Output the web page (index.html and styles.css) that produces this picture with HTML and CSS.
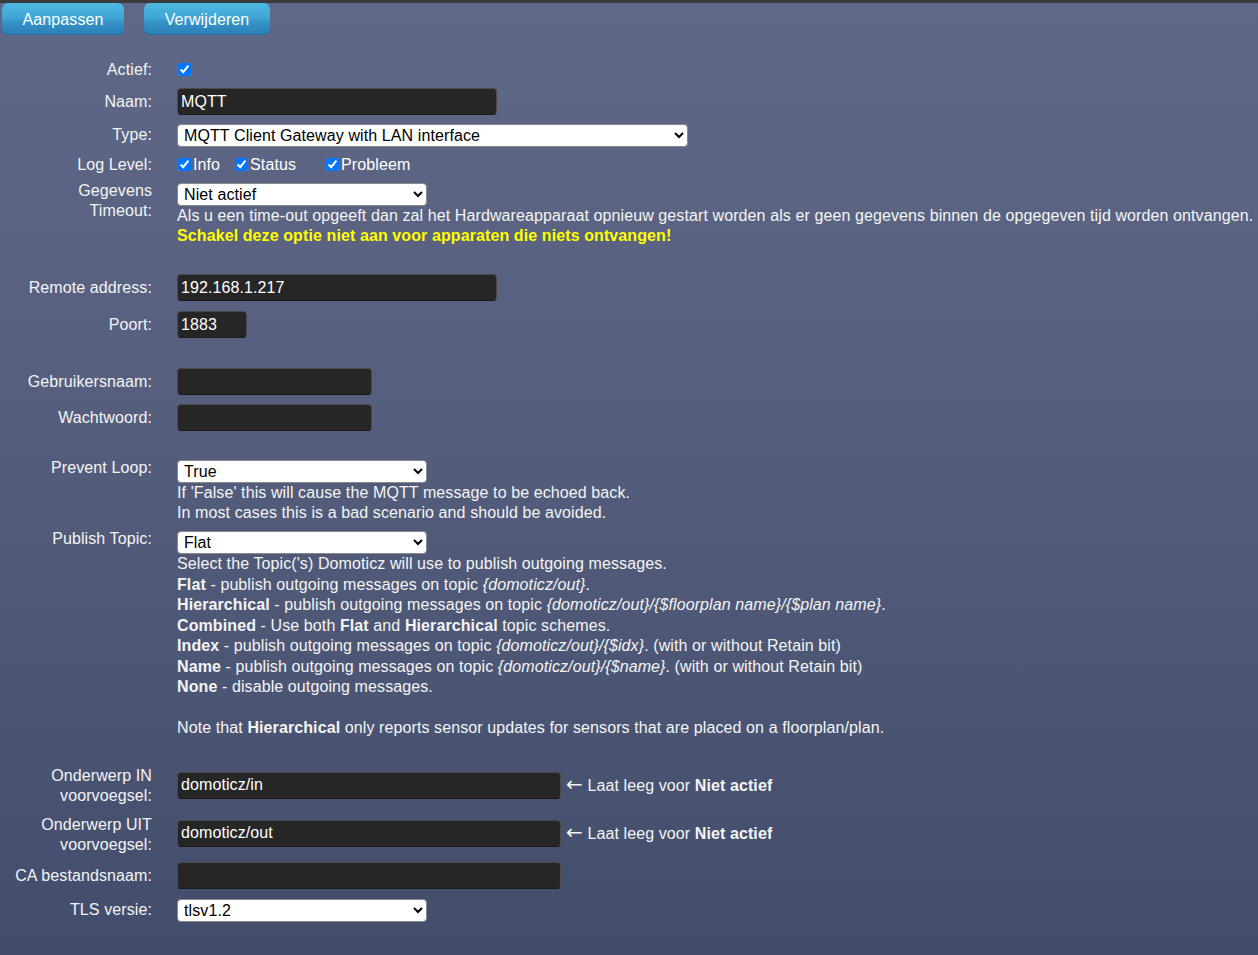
FILE: index.html
```html
<!DOCTYPE html>
<html lang="nl">
<head>
    <meta charset="UTF-8">
    <title>Hardware - MQTT</title>
    <link rel="stylesheet" href="styles.css">
</head>
<body>
    <div class="topbar"></div>

    <div class="actions">
        <button class="btn btn-edit">Aanpassen</button>
        <button class="btn btn-delete">Verwijderen</button>
    </div>

    <form class="hw-form">
        <div class="row row-active">
            <label class="lbl">Actief:</label>
            <div class="field"><input type="checkbox" class="chk" checked></div>
        </div>

        <div class="row gap-8">
            <label class="lbl lbl-input">Naam:</label>
            <div class="field"><input type="text" class="txt w-320" value="MQTT"></div>
        </div>

        <div class="row gap-9">
            <label class="lbl lbl-select">Type:</label>
            <div class="field">
                <select class="sel w-511">
                    <option>MQTT Client Gateway with LAN interface</option>
                </select>
            </div>
        </div>

        <div class="row gap-8">
            <label class="lbl">Log Level:</label>
            <div class="field loglevel">
                <span class="log-item"><input type="checkbox" class="chk" checked>Info</span>
                <span class="log-item log-status"><input type="checkbox" class="chk" checked>Status</span>
                <span class="log-item log-error"><input type="checkbox" class="chk" checked>Probleem</span>
            </div>
        </div>

        <div class="row gap-8">
            <label class="lbl lbl-up">Gegevens<br>Timeout:</label>
            <div class="field">
                <select class="sel w-250">
                    <option>Niet actief</option>
                </select>
                <p class="help nowrap">Als u een time-out opgeeft dan zal het Hardwareapparaat opnieuw gestart worden als er geen gegevens binnen de opgegeven tijd worden ontvangen.</p>
                <p class="help warn">Schakel deze optie niet aan voor apparaten die niets ontvangen!</p>
            </div>
        </div>

        <div class="row gap-28">
            <label class="lbl lbl-input">Remote address:</label>
            <div class="field"><input type="text" class="txt w-320" value="192.168.1.217"></div>
        </div>

        <div class="row gap-10">
            <label class="lbl lbl-input">Poort:</label>
            <div class="field"><input type="text" class="txt w-70" value="1883"></div>
        </div>

        <div class="row gap-30">
            <label class="lbl lbl-input">Gebruikersnaam:</label>
            <div class="field"><input type="text" class="txt w-195"></div>
        </div>

        <div class="row gap-9">
            <label class="lbl lbl-input">Wachtwoord:</label>
            <div class="field"><input type="password" class="txt w-195"></div>
        </div>

        <div class="row gap-29">
            <label class="lbl lbl-up">Prevent Loop:</label>
            <div class="field">
                <select class="sel w-250">
                    <option>True</option>
                    <option>False</option>
                </select>
                <p class="help">If 'False' this will cause the MQTT message to be echoed back.</p>
                <p class="help">In most cases this is a bad scenario and should be avoided.</p>
            </div>
        </div>

        <div class="row gap-8">
            <label class="lbl lbl-up">Publish Topic:</label>
            <div class="field topics">
                <select class="sel w-250">
                    <option>Flat</option>
                </select>
                <p class="help">Select the Topic('s) Domoticz will use to publish outgoing messages.</p>
                <p class="help"><b>Flat</b> - publish outgoing messages on topic <i>{domoticz/out}</i>.</p>
                <p class="help"><b>Hierarchical</b> - publish outgoing messages on topic <i>{domoticz/out}/{$floorplan name}/{$plan name}</i>.</p>
                <p class="help"><b>Combined</b> - Use both <b>Flat</b> and <b>Hierarchical</b> topic schemes.</p>
                <p class="help"><b>Index</b> - publish outgoing messages on topic <i>{domoticz/out}/{$idx}</i>. (with or without Retain bit)</p>
                <p class="help"><b>Name</b> - publish outgoing messages on topic <i>{domoticz/out}/{$name}</i>. (with or without Retain bit)</p>
                <p class="help"><b>None</b> - disable outgoing messages.</p>
                <p class="help">&nbsp;</p>
                <p class="help">Note that <b>Hierarchical</b> only reports sensor updates for sensors that are placed on a floorplan/plan.</p>
            </div>
        </div>

        <div class="row gap-27">
            <label class="lbl">Onderwerp IN<br>voorvoegsel:</label>
            <div class="field inline drop-6">
                <input type="text" class="txt w-384" value="domoticz/in">
                <span class="hint"><span class="arrow">&larr;</span> Laat leeg voor <b>Niet actief</b></span>
            </div>
        </div>

        <div class="row gap-9">
            <label class="lbl">Onderwerp UIT<br>voorvoegsel:</label>
            <div class="field inline drop-5">
                <input type="text" class="txt w-384" value="domoticz/out">
                <span class="hint"><span class="arrow">&larr;</span> Laat leeg voor <b>Niet actief</b></span>
            </div>
        </div>

        <div class="row gap-7">
            <label class="lbl lbl-input">CA bestandsnaam:</label>
            <div class="field"><input type="text" class="txt w-384"></div>
        </div>

        <div class="row gap-10">
            <label class="lbl lbl-select">TLS versie:</label>
            <div class="field">
                <select class="sel w-250">
                    <option>tlsv1.2</option>
                </select>
            </div>
        </div>
    </form>
</body>
</html>
```

FILE: styles.css
```css
* {
    margin: 0;
    padding: 0;
    box-sizing: border-box;
}

html, body {
    min-height: 100%;
}

body {
    font-family: "Liberation Sans", Arial, sans-serif;
    font-size: 16px;
    letter-spacing: 0.1px;
    color: #ffffff;
    background: linear-gradient(180deg, #5f6987 0%, #56607e 40%, #424d6b 100%);
    min-height: 955px;
    overflow: hidden;
}

.topbar {
    height: 3px;
    background: #3b3b3d;
}

.actions {
    display: flex;
    gap: 20px;
    padding-left: 2px;
}

.btn {
    height: 32px;
    padding-top: 1px;
    border: none;
    border-radius: 6px;
    font-family: inherit;
    font-size: 16px;
    letter-spacing: 0.1px;
    color: #ffffff;
    background: linear-gradient(180deg, #4fb9e2 0%, #40a6d6 45%, #3592c6 60%, #2a7fb7 100%);
    box-shadow: inset 0 -1px 0 #276f9f;
    cursor: pointer;
}

.btn-edit {
    width: 122px;
}

.btn-delete {
    width: 126px;
}

/* form rows */

.row {
    display: flex;
    align-items: flex-start;
}

.lbl {
    width: 152px;
    flex: none;
    text-align: right;
    line-height: 20px;
    color: #f4f4f4;
}

.lbl-input {
    padding-top: 4px;
}

.lbl-select {
    padding-top: 1px;
}

.lbl-up {
    margin-top: -2px;
}

.field {
    margin-left: 25px;
    line-height: 20px;
}

.row-active {
    margin-top: 25px;
}

.gap-7 { margin-top: 7px; }
.gap-8 { margin-top: 8px; }
.gap-9 { margin-top: 9px; }
.gap-10 { margin-top: 10px; }
.gap-27 { margin-top: 27px; }
.gap-28 { margin-top: 28px; }
.gap-29 { margin-top: 29px; }
.gap-30 { margin-top: 30px; }

.drop-6 { margin-top: 6px; }
.drop-5 { margin-top: 5px; }

.chk {
    width: 13px;
    height: 13px;
    margin: 3px 2px 0 1px;
    vertical-align: top;
    accent-color: #0075ff;
}

.loglevel {
    display: flex;
}

.log-item {
    display: inline-flex;
    align-items: flex-start;
}

.log-status {
    margin-left: 14px;
}

.log-error {
    margin-left: 29px;
}

.txt {
    display: block;
    height: 27px;
    padding: 0 3px;
    font-family: inherit;
    font-size: 16px;
    letter-spacing: 0.1px;
    color: #ffffff;
    background: #262626;
    border: 1px solid #4a4a4a;
    border-bottom-color: #1a1a1a;
    border-radius: 4px;
    outline: none;
}

.sel {
    display: block;
    height: 23px;
    padding: 0 2px;
    font-family: inherit;
    font-size: 16px;
    letter-spacing: 0.1px;
    color: #000000;
    background: #ffffff;
    border: 1px solid #8a8a8a;
    border-radius: 4px;
}

.w-70 { width: 70px; }
.w-195 { width: 195px; }
.w-250 { width: 250px; }
.w-320 { width: 320px; }
.w-384 { width: 384px; }
.w-511 { width: 511px; }

.help {
    line-height: 20px;
    color: #f4f4f4;
}

.topics .help {
    line-height: 20.5px;
}

.nowrap {
    white-space: nowrap;
}

.warn {
    color: #ffff00;
    font-weight: bold;
}

.inline {
    display: flex;
    align-items: center;
}

.hint {
    margin-left: 5px;
    color: #f4f4f4;
}

.arrow {
    font-family: "DejaVu Sans", sans-serif;
    font-size: 20px;
    line-height: 1;
}
```
